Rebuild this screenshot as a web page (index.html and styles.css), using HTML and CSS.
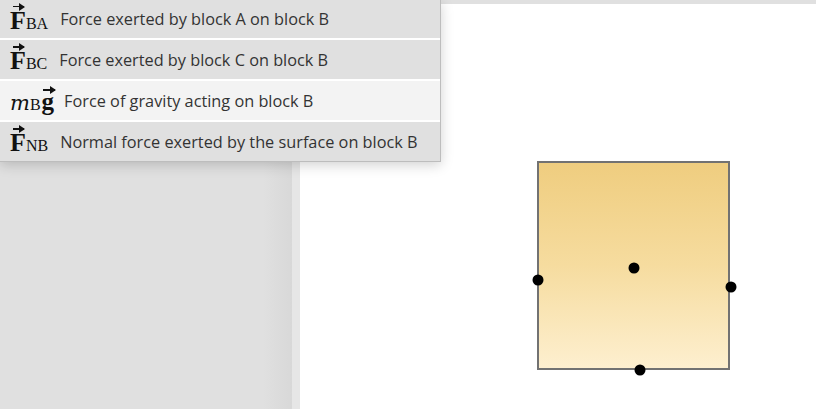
FILE: index.html
```html
<!DOCTYPE html>
<html lang="en">

<head>
  <meta charset="UTF-8" />
  <meta name="viewport" content="width=device-width, initial-scale=1.0" />
  <title>Free body diagram - block B</title>
  <link rel="stylesheet" href="styles.css">
</head>

<body>
  <div class="workspace">
    <aside class="sidebar">
      <div class="sidebar-body"></div>
      <div class="sidebar-edge"></div>
    </aside>

    <main class="canvas">
      <div class="canvas-bar"></div>
      <div class="stage">
        <div class="block">
          <span class="pin pin-left"></span>
          <span class="pin pin-center"></span>
          <span class="pin pin-right"></span>
          <span class="pin pin-bottom"></span>
        </div>
      </div>
    </main>

    <!-- force picker, open over the sidebar -->
    <ul class="force-menu">
      <li class="force-item">
        <span class="sym"><span class="vec vec-f">F</span><sub>BA</sub></span>
        <span class="label">Force exerted by block A on block B</span>
      </li>
      <li class="force-item">
        <span class="sym"><span class="vec vec-f">F</span><sub>BC</sub></span>
        <span class="label">Force exerted by block C on block B</span>
      </li>
      <li class="force-item active">
        <span class="sym"><i class="mass">m</i><sub>B</sub><span class="vec vec-g">g</span></span>
        <span class="label">Force of gravity acting on block B</span>
      </li>
      <li class="force-item">
        <span class="sym"><span class="vec vec-f">F</span><sub>NB</sub></span>
        <span class="label">Normal force exerted by the surface on block B</span>
      </li>
    </ul>
  </div>
</body>

</html>
```

FILE: styles.css
```css
html,
body {
  margin: 0;
  padding: 0;
  height: 100%;
}

body {
  font-family: 'Open Sans', 'Noto Sans', sans-serif;
  color: #333;
  overflow: hidden;
}

.workspace {
  position: relative;
  display: flex;
  height: 409px;
}

.sidebar {
  display: flex;
  width: 300px;
  flex-shrink: 0;
}

.sidebar-body {
  flex: 1;
  background: linear-gradient(to right, #e0e0e0 0%, #e0e0e0 90%, #d8d8d8 100%);
}

.sidebar-edge {
  width: 8px;
  background: #e6e6e6;
}

.canvas {
  flex: 1;
  display: flex;
  flex-direction: column;
  background: #fff;
}

.canvas-bar {
  height: 4px;
  background: #e0e0e0;
}

.stage {
  position: relative;
  flex: 1;
}

/* block B, drawn on the free canvas */
.block {
  position: absolute;
  left: 237px;
  top: 157px;
  width: 189px;
  height: 205px;
  border: 2.5px solid #727272;
  background: linear-gradient(to bottom, #efcd7f 0%, #f6dc9f 50%, #fdefcf 100%);
}

.pin {
  position: absolute;
  width: 11px;
  height: 11px;
  border-radius: 50%;
  background: #000;
  transform: translate(-50%, -50%);
}

.pin-left {
  left: -1px;
  top: 117px;
}

.pin-center {
  left: 95px;
  top: 105px;
}

.pin-right {
  left: 192px;
  top: 124px;
}

.pin-bottom {
  left: 101px;
  top: 207px;
}

.force-menu {
  position: absolute;
  left: 0;
  top: 0;
  width: 440px;
  margin: 0;
  padding: 0;
  list-style: none;
  background: #e0e0e0;
  border-right: 1px solid #bdbdbd;
  border-bottom: 1px solid #bdbdbd;
  box-shadow: 0 3px 12px rgba(0, 0, 0, 0.18);
}

.force-item {
  display: flex;
  align-items: center;
  height: 39px;
  padding-left: 10px;
  border-top: 2px solid #fff;
}

.force-item:first-child {
  border-top: none;
  height: 38px;
}

.force-item.active {
  background: #f3f3f3;
}

.sym {
  display: inline-flex;
  align-items: baseline;
  font-family: 'Liberation Serif', 'DejaVu Serif', serif;
  color: #111;
  margin-right: 12px;
  white-space: nowrap;
  padding-top: 3px;
}

.active .sym {
  margin-right: 10px;
}

.sym sub {
  font-size: 16px;
  vertical-align: -4px;
  line-height: 1;
}

.vec {
  position: relative;
  font-weight: bold;
  font-size: 26px;
  line-height: 1;
}

/* arrow over the vector letter */
.vec::before {
  content: "";
  position: absolute;
  left: 3px;
  right: 2px;
  top: -2px;
  height: 1.5px;
  background: #111;
}

.vec::after {
  content: "";
  position: absolute;
  right: 1px;
  top: -5px;
  border-top: 4px solid transparent;
  border-bottom: 4px solid transparent;
  border-left: 6px solid #111;
}

.vec-g {
  margin-left: 1px;
  font-size: 25px;
}

.vec-g::before {
  top: 0;
  left: 1px;
  right: -1px;
}

.vec-g::after {
  top: -3px;
  right: -2px;
}

.mass {
  font-family: 'DejaVu Serif', serif;
  font-size: 21px;
  font-weight: normal;
}

.label {
  font-size: 16.3px;
  color: #333;
  white-space: nowrap;
}
```
